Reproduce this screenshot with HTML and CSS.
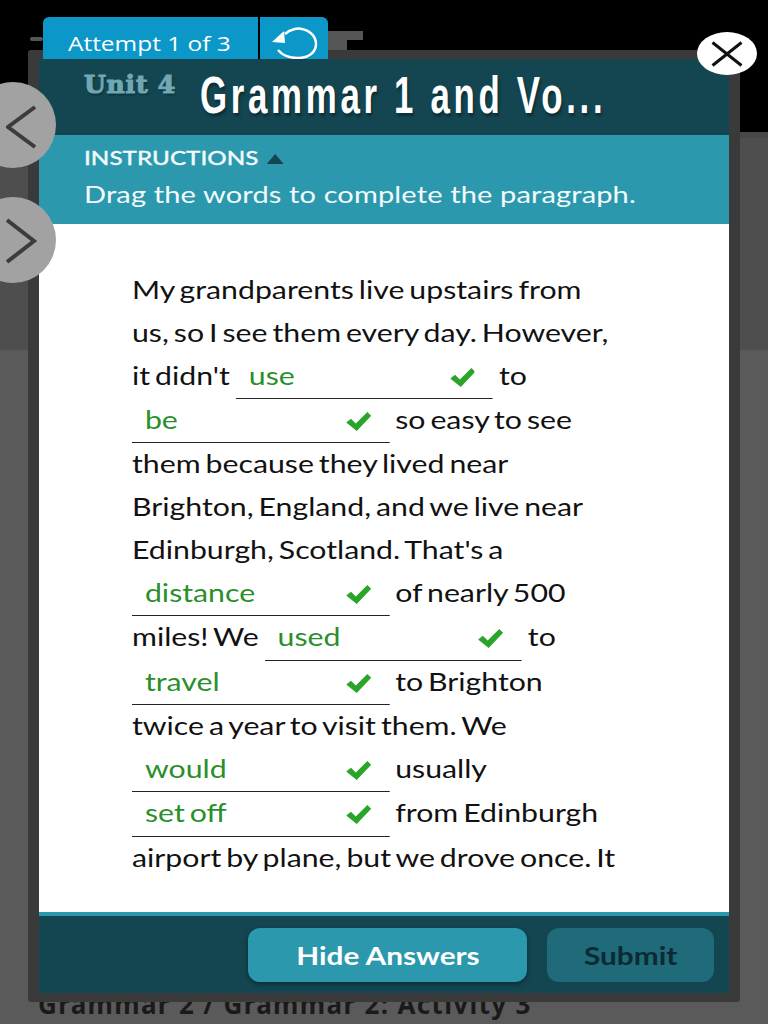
FILE: index.html
```html
<!DOCTYPE html>
<html lang="en">
<head>
<meta charset="utf-8">
<title>Grammar 1 and Vocabulary</title>
<link rel="stylesheet" href="styles.css">
</head>
<body>
<svg width="0" height="0" class="defs"><symbol id="tick" viewBox="0 0 26 20" preserveAspectRatio="none"><path d="M0 11l5-4 5 5L22 0l4 4-15 16z" fill="#2aa52a"/></symbol></svg>
<div class="backdrop">
  <div class="backdrop-top">
    <div class="top-left"></div>
    <div class="top-right"><div class="top-right-bar"></div><div class="top-right-stem"></div></div>
  </div>
  <div class="backdrop-band"></div>
  <div class="backdrop-main"><div class="crumb">Grammar 2 / Grammar 2: Activity 3</div></div>
</div>

<div class="tabs">
  <div class="tab-label"><span class="stretch">Attempt 1 of 3</span></div>
  <div class="tab-reset">
    <svg width="68" height="42" viewBox="260 17 68 42"><path d="M285 34C290 29 298 28 302 29C311 31 316 37 316 44C316 52 309 58 298 58C290 58 283 56 278 50" fill="none" stroke="#fff" stroke-width="2.500"/><path d="M272 42L284 31L285 43Z" fill="#fff"/></svg>
  </div>
</div>

<main class="modal">
  <div class="panel">
    <header class="head">
      <span class="unit">Unit 4</span>
      <h1 class="title"><span class="title-in">Grammar 1 and Vo...</span></h1>
    </header>
    <section class="instructions">
      <div class="ins-head stretch"><span class="ins-word">INSTRUCTIONS</span><span class="tri"></span></div>
      <div class="ins-text stretch">Drag the words to complete the paragraph.</div>
    </section>
    <section class="body">
      <div class="para stretch">
        <div class="line">My grandparents live upstairs from</div>
        <div class="line">us, so I see them every day. However,</div>
        <div class="line line-blank"><span>it didn't</span><span class="blank"><span class="ans">use</span><svg class="tick"><use href="#tick"/></svg></span><span>to</span></div>
        <div class="line line-blank"><span class="blank"><span class="ans">be</span><svg class="tick"><use href="#tick"/></svg></span><span>so easy to see</span></div>
        <div class="line">them because they lived near</div>
        <div class="line">Brighton, England, and we live near</div>
        <div class="line">Edinburgh, Scotland. That's a</div>
        <div class="line line-blank"><span class="blank"><span class="ans">distance</span><svg class="tick"><use href="#tick"/></svg></span><span>of nearly 500</span></div>
        <div class="line line-blank"><span>miles! We</span><span class="blank"><span class="ans">used</span><svg class="tick"><use href="#tick"/></svg></span><span>to</span></div>
        <div class="line line-blank"><span class="blank"><span class="ans">travel</span><svg class="tick"><use href="#tick"/></svg></span><span>to Brighton</span></div>
        <div class="line">twice a year to visit them. We</div>
        <div class="line line-blank"><span class="blank"><span class="ans">would</span><svg class="tick"><use href="#tick"/></svg></span><span>usually</span></div>
        <div class="line line-blank"><span class="blank"><span class="ans">set off</span><svg class="tick"><use href="#tick"/></svg></span><span>from Edinburgh</span></div>
        <div class="line">airport by plane, but we drove once. It</div>
      </div>
    </section>
    <footer class="foot">
      <button class="btn btn-hide"><span class="btn-text">Hide Answers</span></button>
      <button class="btn btn-submit"><span class="btn-text">Submit</span></button>
    </footer>
  </div>
</main>

<button class="nav nav-prev"><svg width="34" height="48" viewBox="0 0 34 48"><path d="M29 6L2 26l27 20" fill="none" stroke="#3c3c3c" stroke-width="4"/></svg></button>
<button class="nav nav-next"><svg width="34" height="48" viewBox="0 0 34 48"><path d="M1 4l27 21L1 46" fill="none" stroke="#3c3c3c" stroke-width="4"/></svg></button>
<button class="close"><svg width="32" height="26" viewBox="0 0 32 26"><path d="M1.500 1.500l29 23M30.500 1.500l-29 23" fill="none" stroke="#111" stroke-width="3"/></svg></button>
</body>
</html>
```
FILE: styles.css
```css
* { box-sizing: border-box; }
html, body { margin: 0; padding: 0; }
body { width: 768px; height: 1024px; overflow: hidden; position: relative; font-family: Lato, sans-serif; background: #5a5a5a; }
.defs { position: absolute; }
.stretch { transform: scaleX(1.21); transform-origin: left center; }
.backdrop { display: flex; flex-direction: column; height: 1024px; }
.backdrop-top { height: 132px; background: #000; padding: 31px 0 0 30px; display: flex; gap: 285px; align-items: flex-start; }
.top-left { width: 13px; height: 4px; margin-top: 6px; background: #555; border-radius: 2px; }
.top-right { width: 35px; }
.top-right-bar { height: 9px; background: #555; }
.top-right-stem { width: 19px; height: 10px; background: #555; }
.backdrop-band { height: 218px; background: #4e4e4e; border-top: 6px solid #484848; }
.backdrop-main { flex: 1; background: #5a5a5a; display: flex; align-items: flex-end; padding: 0 0 5px 38px; }
.crumb { font-family: "Noto Sans", sans-serif; font-weight: 700; font-size: 26px; letter-spacing: 1.350px; color: #1a1a1a; line-height: 30px; white-space: nowrap; }
.tabs { position: absolute; left: 43px; top: 17px; display: flex; gap: 2px; height: 42px; z-index: 4; background: #000; border-radius: 6px 6px 0 0; }
.tab-label { width: 215px; background: #0b97c8; color: #fff; font-family: "Open Sans", sans-serif; font-size: 20.200px; line-height: 53px; padding-left: 25px; border-radius: 6px 0 0 0; overflow: hidden; white-space: nowrap; }
.tab-label .stretch { display: inline-block; }
.tab-reset { width: 68px; background: #0b97c8; border-radius: 0 6px 0 0; overflow: hidden; }
.tab-reset svg { display: block; }
.modal { position: absolute; left: 28px; top: 50px; width: 712px; height: 952px; background: #3a3a3a; border-radius: 3px; padding: 9px 11px; z-index: 3; }
.panel { height: 100%; display: flex; flex-direction: column; background: #fff; }
.head { height: 76px; background: #134651; display: flex; align-items: flex-start; padding: 0 0 0 45px; }
.unit { flex: none; font-family: "DejaVu Serif", serif; font-weight: 700; font-size: 25px; line-height: 32px; color: #6fa7b3; margin-top: 10px; width: 116px; white-space: nowrap; -webkit-text-stroke: 1.200px #6fa7b3; letter-spacing: .8px; text-shadow: 1px 2px 2px rgba(0,0,0,.4); }
.title { flex: none; width: 424px; height: 76px; overflow: hidden; margin: 0; font-family: "Liberation Sans", sans-serif; font-weight: 700; font-size: 52px; line-height: 72px; color: #fff; text-shadow: 2px 3px 3px rgba(0,0,0,.35); }
.title-in { display: inline-block; transform: scaleX(.67); transform-origin: left; white-space: nowrap; letter-spacing: 5.500px; }
.instructions { height: 89px; background: #2b98ae; padding: 8px 0 0 45px; color: #f2fafb; }
.ins-head { display: flex; align-items: center; gap: 6.500px; height: 28px; width: fit-content; }
.ins-word { font-size: 20px; font-weight: 500; -webkit-text-stroke: .3px #f2fafb; }
.tri { width: 0; height: 0; border-left: 7px solid transparent; border-right: 7px solid transparent; border-bottom: 10px solid #134651; margin-top: 4px; }
.ins-text { font-size: 24px; line-height: 29px; margin-top: 8px; white-space: nowrap; letter-spacing: .1px; width: fit-content; }
.body { flex: 1; overflow: hidden; padding: 43.500px 0 0 93px; }
.para { width: 405px; font-size: 25px; color: #111; word-spacing: -2.300px; }
.line { height: 43px; line-height: 43px; display: flex; gap: 5px; white-space: nowrap; }
.line-blank { height: 44.300px; line-height: 42px; }
.blank { display: block; position: relative; width: 212.500px; height: calc(100% + 1px); border-bottom: 1.500px solid #222; padding-left: 10.700px; flex: none; }
.ans { color: #2a8f2a; }
.tick { position: absolute; right: 15px; top: 14px; width: 20.700px; height: 19px; }
.foot { height: 81px; background: #134651; border-top: 4px solid #2b98ae; display: flex; justify-content: flex-end; align-items: flex-start; gap: 20px; padding: 12px 15px 0 0; }
.btn { height: 54px; border: 0; border-radius: 12px; font-family: Lato, sans-serif; font-weight: 700; font-size: 24px; padding: 0; }
.btn-text { display: inline-block; transform: scaleX(1.24); }
.btn-hide { width: 279px; background: #2b98ae; color: #fff; box-shadow: 0 2px 5px rgba(0,0,0,.4); }
.btn-submit { width: 167px; background: #1f6b7a; color: #0c2a33; }
.nav { position: absolute; left: 0; width: 56px; height: 86px; clip-path: circle(43px at 13px 43px); background: #a2a2a2; border: 0; padding: 0 0 0 6px; z-index: 5; display: flex; align-items: center; justify-content: flex-start; }
.nav-prev { top: 82px; }
.nav-next { top: 197px; }
.close { position: absolute; left: 697px; top: 32px; width: 60px; height: 43px; border-radius: 50%; background: #fff; border: 0; z-index: 5; display: flex; align-items: center; justify-content: center; padding: 0; }
```
